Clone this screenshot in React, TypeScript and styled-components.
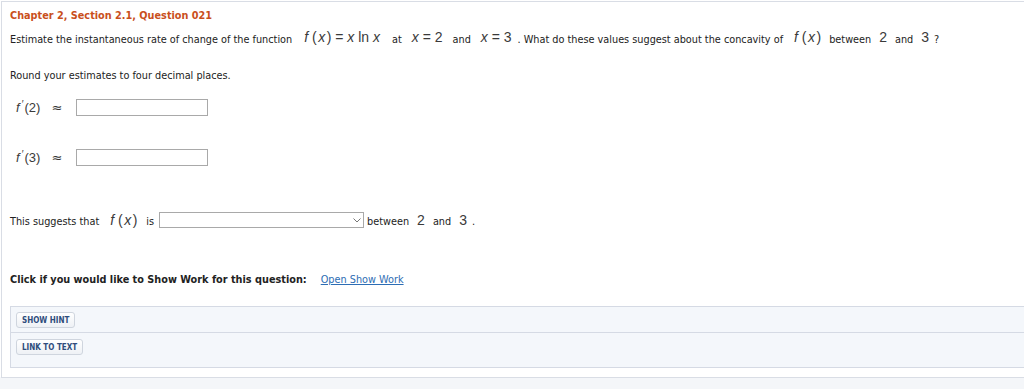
import React from 'react';
import styled, { createGlobalStyle } from 'styled-components';

const Global = createGlobalStyle`
  html, body { margin: 0; padding: 0; background: #ffffff; }
  body { font-family: "DejaVu Sans Condensed", "DejaVu Sans", Verdana, sans-serif; overflow: hidden; }
`;

const Page = styled.div`
  width: 1024px;
  height: 389px;
  box-sizing: border-box;
  padding: 1px 0 0 1px;
  background: linear-gradient(#ffffff, #ffffff) top / 100% 377px no-repeat, #f4f6f9;
  overflow: hidden;
`;

const Question = styled.div`
  background: #ffffff;
  border: 1px solid #d9dde5;
  border-right: none;
  padding: 6px 0 9px 8px;
  color: #222222;
  font-size: 10.8px;
`;

const Title = styled.div`
  font-size: 10.8px;
  font-weight: bold;
  line-height: 16px;
  color: #c94f1c;
`;

const Line = styled.div<{ $top: number; $h?: number; $end?: boolean }>`
  margin-top: ${(p) => p.$top}px;
  height: ${(p) => p.$h ?? 16}px;
  display: flex;
  align-items: ${(p) => (p.$end ? 'flex-end' : 'center')};
  line-height: ${(p) => (p.$end ? '12px' : 'normal')};
  white-space: nowrap;
`;

const Math = styled.span<{ $l?: number; $r?: number }>`
  font-family: "Liberation Sans", Arial, sans-serif;
  font-size: 14px;
  color: #3a3a3a;
  padding: 0 ${(p) => p.$r ?? 9}px 0 ${(p) => p.$l ?? 9}px;
  position: relative;
  top: -2px;
`;

const V = styled.i`
  font-style: italic;
`;

const Arg = styled.i`
  font-style: italic;
  margin: 0 1.5px;
`;

const Gap = styled.span<{ $w: number }>`
  display: inline-block;
  width: ${(p) => p.$w}px;
`;

const Label = styled.span`
  font-family: "Liberation Sans", Arial, sans-serif;
  font-size: 13px;
  color: #3a3a3a;
  width: 60px;
  padding-left: 6px;
  display: inline-flex;
  align-items: center;
`;

const Prime = styled.sup`
  font-size: 10px;
  position: relative;
  top: -3px;
  margin: 0 1px 0 2px;
`;

const Approx = styled.span`
  font-family: "DejaVu Sans", sans-serif;
  font-size: 13px;
  color: #333;
  margin-left: 11px;
`;

const TextInput = styled.input`
  box-sizing: border-box;
  width: 132px;
  height: 17px;
  border: 1px solid #a9a9a9;
  margin: 0;
  padding: 0 2px;
  background: #fff;
`;

const Select = styled.div`
  box-sizing: border-box;
  flex: 0 0 205px;
  height: 16px;
  border: 1px solid #a9a9a9;
  margin-left: 5px;
  display: flex;
  align-items: center;
  justify-content: flex-end;
  padding-right: 2px;
  color: #777;
`;

const Bold = styled.span`
  font-weight: bold;
`;

const Link = styled.a`
  color: #2d6db4;
  text-decoration: underline;
  margin-left: 14px;
  cursor: pointer;
`;

const Panel = styled.div`
  margin-top: 19px;
  background: #f4f7fb;
  border: 1px solid #d5dae4;
  border-right: none;
`;

const PanelRow = styled.div<{ $pt: number; $pb: number; $first?: boolean }>`
  padding: ${(p) => p.$pt}px 5px ${(p) => p.$pb}px 5px;
  border-bottom: ${(p) => (p.$first ? '1px solid #d5dae4' : 'none')};
`;

const Btn = styled.button`
  box-sizing: border-box;
  height: 16px;
  padding: 0 5px;
  font-family: "DejaVu Sans Condensed", "DejaVu Sans", sans-serif;
  font-size: 8px;
  font-weight: bold;
  color: #2f4d7c;
  background: linear-gradient(#ffffff, #eef1f5);
  border: 1px solid #cfd5de;
  border-radius: 3px;
  display: block;
`;

const Chevron = () => (
  <svg width="8" height="5" viewBox="0 0 8 5">
    <path d="M0.5 0.5 L4 4 L7.5 0.5" fill="none" stroke="#777" strokeWidth="1" />
  </svg>
);

export default function App() {
  return (
    <>
      <Global />
      <Page>
        <Question>
          <Title>Chapter 2, Section 2.1, Question 021</Title>
          <Line $top={6} $h={18}>
            Estimate the instantaneous rate of change of the function
            <Math $l={12} $r={12}>
              <V>f</V> (<Arg>x</Arg>) = <V>x</V> ln <V>x</V>
            </Math>
            at
            <Math $l={10} $r={10}>
              <V>x</V> = 2
            </Math>
            and
            <Math $l={10} $r={6}>
              <V>x</V> = 3
            </Math>
            . What do these values suggest about the concavity of
            <Math $l={11} $r={8}>
              <V>f</V> (<Arg>x</Arg>)
            </Math>
            between
            <Math $l={8} $r={8}>2</Math>
            and
            <Math $l={8} $r={5}>3</Math>
            ?
          </Line>
          <Line $top={19}>Round your estimates to four decimal places.</Line>
          <Line $top={16}>
            <Label>
              <V>f</V>
              <Prime>′</Prime>(2)<Approx>≈</Approx>
            </Label>
            <TextInput />
          </Line>
          <Line $top={34}>
            <Label>
              <V>f</V>
              <Prime>′</Prime>(3)<Approx>≈</Approx>
            </Label>
            <TextInput />
          </Line>
          <Line $top={47} $end>
            This suggests that
            <Math $l={11} $r={9}>
              <V>f</V> (<Arg>x</Arg>)
            </Math>
            is
            <Select>
              <Chevron />
            </Select>
            <Gap $w={3} />
            between
            <Math $l={8} $r={8}>2</Math>
            and
            <Math $l={8} $r={5}>3</Math>.
          </Line>
          <Line $top={43}>
            <Bold>Click if you would like to Show Work for this question:</Bold>
            <Link>Open Show Work</Link>
          </Line>
          <Panel>
            <PanelRow $pt={5} $pb={4} $first>
              <Btn>SHOW HINT</Btn>
            </PanelRow>
            <PanelRow $pt={6} $pb={12}>
              <Btn>LINK TO TEXT</Btn>
            </PanelRow>
          </Panel>
        </Question>
      </Page>
    </>
  );
}
